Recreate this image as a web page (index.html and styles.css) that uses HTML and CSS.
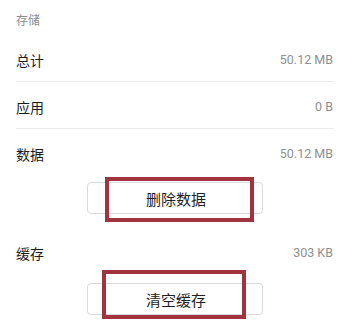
FILE: index.html
```html
<!DOCTYPE html>
<html lang="zh">
<head>
<meta charset="utf-8">
<link rel="stylesheet" href="styles.css">
</head>
<body>
<div class="page">
  <div class="section-title">存储</div>
  <div class="row divided"><span class="label">总计</span><span class="value">50.12 MB</span></div>
  <div class="row divided"><span class="label">应用</span><span class="value">0 B</span></div>
  <div class="row"><span class="label">数据</span><span class="value">50.12 MB</span></div>
  <div class="btn-wrap first"><div class="btn">删除数据</div></div>
  <div class="row cache"><span class="label">缓存</span><span class="value">303 KB</span></div>
  <div class="btn-wrap second"><div class="btn">清空缓存</div></div>
  <div class="mark mark-one"></div>
  <div class="mark mark-two"></div>
</div>
</body>
</html>
```

FILE: styles.css
```css
html, body {
  margin: 0;
  padding: 0;
  background: #ffffff;
}
body {
  width: 347px;
  height: 321px;
  overflow: hidden;
  font-family: "Noto Sans CJK SC", "Noto Sans", sans-serif;
}
.page {
  position: relative;
  padding: 0 13px 0 16px;
}
.section-title {
  height: 35px;
  padding-top: 0;
  display: flex;
  align-items: center;
  padding-top: 5px;
  box-sizing: border-box;
  font-size: 12px;
  color: #8c8c8c;
  line-height: 1;
}
.row {
  height: 42px;
  padding-top: 4px;
  display: flex;
  align-items: center;
  justify-content: space-between;
}
.row.divided {
  border-bottom: 1px solid #ececec;
}
.label {
  font-size: 14px;
  color: #1c1c1c;
  line-height: 1;
}
.value {
  font-family: Roboto, "Noto Sans", sans-serif;
  font-size: 12.5px;
  color: #8f8f8f;
  line-height: 1;
  margin-right: 1px;
}
.btn-wrap {
  display: flex;
  padding-left: 71px;
}
.btn-wrap.first {
  margin-top: 7px;
}
.btn-wrap.second {
  margin-top: 9px;
}
.row.cache {
  margin-top: 14px;
}
.btn {
  width: 176px;
  height: 32px;
  box-sizing: border-box;
  border: 1px solid #dadada;
  border-radius: 4px;
  display: flex;
  align-items: center;
  justify-content: center;
  font-size: 15px;
  color: #1f1f1f;
  line-height: 1;
  padding-left: 2px;
}
.mark {
  position: absolute;
  box-sizing: border-box;
  border: 4px solid #a1333f;
}
.mark-one {
  left: 105px;
  top: 177px;
  width: 149px;
  height: 45px;
}
.mark-two {
  left: 102px;
  top: 270px;
  width: 144px;
  height: 49px;
}
```
